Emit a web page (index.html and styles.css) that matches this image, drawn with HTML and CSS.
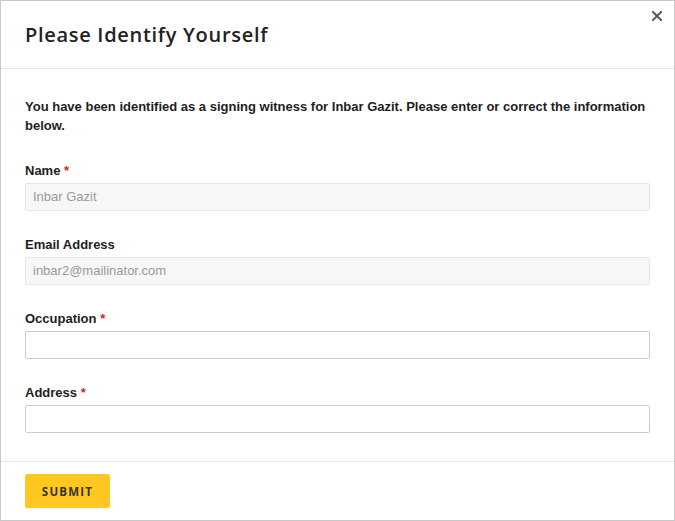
FILE: index.html
```html
<!DOCTYPE html>
<html>
<head>
<meta charset="utf-8">
<link rel="stylesheet" href="styles.css">
</head>
<body>
<div class="dialog">
  <div class="header">
    <h1 class="title">Please Identify Yourself</h1>
    <button class="close" aria-label="Close">
      <svg width="10" height="10" viewBox="0 0 10 10"><path d="M1 1L9 9M9 1L1 9" stroke="#5a5a5a" stroke-width="2" stroke-linecap="square"/></svg>
    </button>
  </div>
  <div class="body">
    <p class="intro">You have been identified as a signing witness for Inbar Gazit. Please enter or correct the information below.</p>
    <div class="field">
      <label class="label">Name <span class="req">*</span></label>
      <div class="input readonly">Inbar Gazit</div>
    </div>
    <div class="field">
      <label class="label">Email Address</label>
      <div class="input readonly">inbar2@mailinator.com</div>
    </div>
    <div class="field">
      <label class="label">Occupation <span class="req">*</span></label>
      <div class="input"></div>
    </div>
    <div class="field">
      <label class="label">Address <span class="req">*</span></label>
      <div class="input"></div>
    </div>
  </div>
  <div class="footer">
    <button class="submit">SUBMIT</button>
  </div>
</div>
</body>
</html>
```
FILE: styles.css
```css
html, body { margin: 0; padding: 0; background: #fff; }
.dialog {
  width: 675px;
  height: 521px;
  box-sizing: border-box;
  border: 1px solid #c8c8c8;
  display: flex;
  flex-direction: column;
  font-family: "Liberation Sans", Arial, sans-serif;
  color: #1e1e1e;
}
.header {
  height: 67px;
  border-bottom: 1px solid #e5e5e5;
  display: flex;
  align-items: center;
  justify-content: space-between;
  padding: 0 0 0 24px;
  position: relative;
}
.title {
  margin: 0;
  font-family: "Open Sans", sans-serif;
  font-weight: 600;
  font-size: 20px;
  letter-spacing: 0.7px;
  color: #222;
}
.close {
  position: absolute;
  top: 10px;
  right: 12px;
  width: 10px;
  height: 10px;
  padding: 0;
  border: 0;
  background: none;
  display: flex;
}
.body {
  flex: 1;
  padding: 28px 24px 0 24px;
}
.intro {
  margin: 0 0 27px 0;
  font-size: 13px;
  line-height: 19px;
  font-weight: 700;
}
.field { margin-bottom: 25px; }
.label {
  display: block;
  font-size: 13px;
  line-height: 18px;
  font-weight: 700;
  margin-bottom: 3px;
}
.req { color: #d1232a; }
.input {
  height: 26px;
  border: 1px solid #ccc;
  border-radius: 2px;
  background: #fff;
  font-size: 13px;
  line-height: 26px;
  padding: 0 7px;
  color: #999;
}
.input.readonly {
  background: #f7f7f7;
  border-color: #e6e6e6;
}
.footer {
  border-top: 1px solid #e5e5e5;
  padding: 12px 24px 12px 24px;
}
.submit {
  width: 85px;
  height: 34px;
  background: #ffc820;
  border: 0;
  border-radius: 2px;
  font-family: "Open Sans", sans-serif;
  font-weight: 700;
  font-size: 11.5px;
  letter-spacing: 1.2px;
  color: #333;
  padding: 0;
}
```
